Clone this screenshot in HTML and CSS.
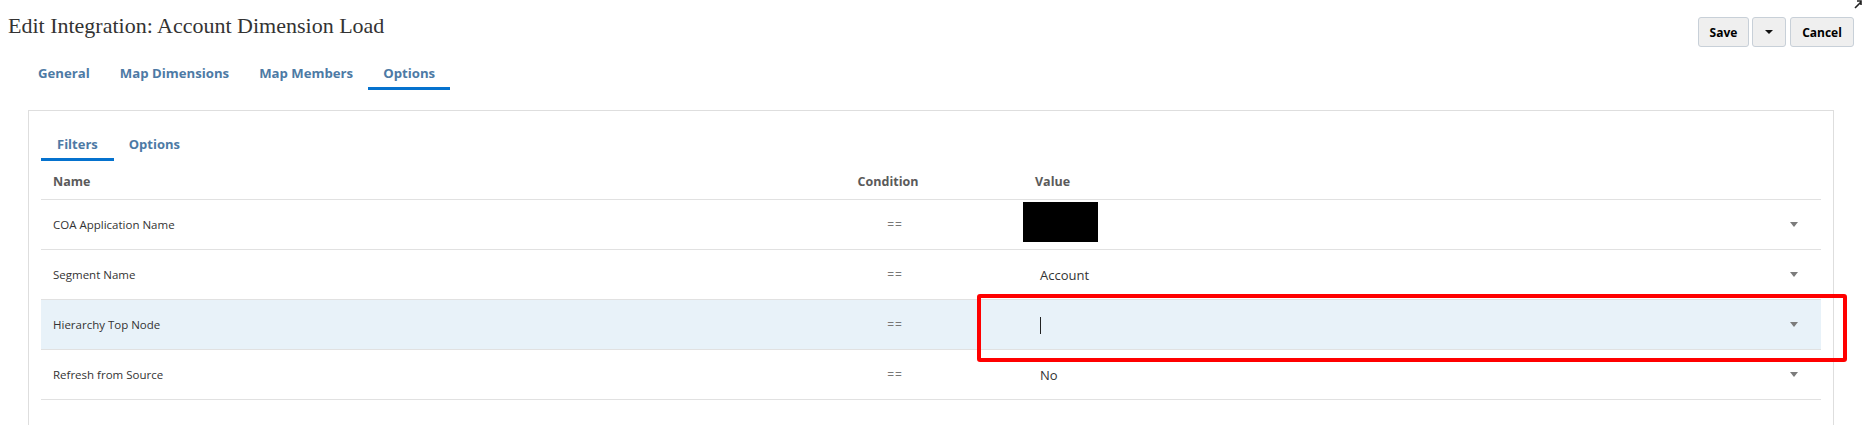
FILE: index.html
```html
<!DOCTYPE html>
<html lang="en">
<head>
<meta charset="utf-8">
<title>Edit Integration: Account Dimension Load</title>
<link rel="stylesheet" href="styles.css">
</head>
<body>
<div class="page">
  <svg class="corner-mark" width="8" height="10" viewBox="0 0 8 10"><path d="M1 9 L7 3 M3 2 L7 2 L7 6" stroke="#222" stroke-width="1.6" fill="none"/></svg>
  <header class="header">
    <h1 class="title">Edit Integration: Account Dimension Load</h1>
    <div class="actions">
      <button class="btn btn-save">Save</button>
      <button class="btn btn-menu"><span class="caret-down"></span></button>
      <button class="btn btn-cancel">Cancel</button>
    </div>
  </header>
  <nav class="tabs">
    <span class="tab">General</span>
    <span class="tab">Map Dimensions</span>
    <span class="tab">Map Members</span>
    <span class="tab active">Options</span>
  </nav>
  <section class="card">
    <nav class="subtabs">
      <span class="tab active">Filters</span>
      <span class="tab">Options</span>
    </nav>
    <div class="table">
      <div class="row head">
        <div class="c-name">Name</div>
        <div class="c-cond">Condition</div>
        <div class="c-val"><span class="head-val">Value</span></div>
      </div>
      <div class="row">
        <div class="c-name">COA Application Name</div>
        <div class="c-cond eq">==</div>
        <div class="c-val"><div class="select"><span class="redacted"></span><span class="arrow"></span></div></div>
      </div>
      <div class="row">
        <div class="c-name">Segment Name</div>
        <div class="c-cond eq">==</div>
        <div class="c-val"><div class="select"><span class="val">Account</span><span class="arrow"></span></div></div>
      </div>
      <div class="row selected">
        <div class="c-name">Hierarchy Top Node</div>
        <div class="c-cond eq">==</div>
        <div class="c-val"><div class="select"><span class="val"><span class="text-cursor"></span></span><span class="arrow"></span></div></div>
      </div>
      <div class="row">
        <div class="c-name">Refresh from Source</div>
        <div class="c-cond eq">==</div>
        <div class="c-val"><div class="select"><span class="val">No</span><span class="arrow"></span></div></div>
      </div>
    </div>
    <div class="highlight-box"></div>
  </section>
</div>
</body>
</html>
```
FILE: styles.css
```css
html, body {
  margin: 0;
  padding: 0;
  background: #ffffff;
}
body {
  font-family: "Open Sans", "Noto Sans", Arial, sans-serif;
  color: #333333;
  width: 1862px;
  height: 425px;
  overflow: hidden;
}
.page {
  position: relative;
  height: 425px;
}
.corner-mark {
  position: absolute;
  right: 0;
  top: -1px;
}
.header {
  display: flex;
  justify-content: space-between;
  align-items: flex-start;
  height: 47px;
}
.title {
  margin: 14px 0 0 8px;
  font-family: "Liberation Serif", "Times New Roman", serif;
  font-weight: normal;
  font-size: 22px;
  line-height: 24px;
  color: #333333;
}
.actions {
  display: flex;
  gap: 3px;
  margin: 17px 8px 0 0;
}
.btn {
  height: 30px;
  box-sizing: border-box;
  border: 1px solid #c8d0d8;
  border-radius: 3px;
  background: #efefef;
  font-family: "Open Sans", Arial, sans-serif;
  font-weight: bold;
  font-size: 12px;
  color: #000;
  padding: 0;
  display: flex;
  align-items: center;
  justify-content: center;
}
.btn-save { width: 51px; }
.btn-menu { width: 34px; margin-right: 1px; }
.btn-cancel { width: 64px; }
.caret-down {
  width: 0;
  height: 0;
  border-left: 4px solid transparent;
  border-right: 4px solid transparent;
  border-top: 4px solid #111;
}
.tabs {
  display: flex;
  margin: 10px 0 0 23px;
}
.tab {
  font-size: 13.2px;
  font-weight: bold;
  color: #4d7aa5;
  line-height: 20px;
  padding: 6px 15px 4px;
  border-bottom: 3px solid transparent;
}
.tab.active {
  border-bottom-color: #0572ce;
}
.card {
  position: relative;
  margin: 20px 28px 0;
  border: 1px solid #dedede;
  border-bottom: none;
  padding: 17px 12px 0;
  height: 297px;
}
.subtabs {
  display: flex;
}
.subtabs .tab {
  font-size: 13px;
}
.subtabs .tab:first-child {
  padding-left: 16px;
  padding-right: 16px;
}
.row {
  display: grid;
  grid-template-columns: 749px 196px 1fr;
  height: 49px;
  border-bottom: 1px solid #e1e1e1;
  align-items: center;
  font-size: 11.5px;
  color: #333;
}
.row.head {
  height: 38px;
  align-items: start;
  font-weight: bold;
  color: #5a5a5a;
  font-size: 12.5px;
}
.row.head > div {
  padding-top: 11px;
  line-height: 20px;
}
.row.selected {
  background: #e8f2f9;
}
.c-name {
  padding-left: 12px;
}
.c-cond {
  text-align: center;
}
.c-cond.eq {
  padding-left: 14px;
  color: #777;
  font-size: 12px;
  letter-spacing: 1px;
}
.c-val {
  padding-left: 37px;
  padding-right: 23px;
  height: 100%;
  display: flex;
  align-items: center;
}
.head-val {
  padding-left: 12px;
}
.row.head .c-val {
  align-items: flex-start;
}
.select {
  flex: 1;
  display: flex;
  align-items: center;
  justify-content: space-between;
  height: 100%;
}
.val {
  padding-left: 17px;
  font-size: 13px;
  color: #333;
  display: flex;
  align-items: center;
}
.redacted {
  display: block;
  width: 75px;
  height: 40px;
  background: #000;
  margin-top: -5px;
}
.text-cursor {
  display: block;
  width: 1px;
  height: 17px;
  background: #222;
  margin-top: 1px;
}
.arrow {
  width: 0;
  height: 0;
  border-left: 4px solid transparent;
  border-right: 4px solid transparent;
  border-top: 5px solid #7b7b7b;
}
.highlight-box {
  position: absolute;
  left: 948px;
  top: 183px;
  width: 862px;
  height: 60px;
  border: 4px solid #ff0000;
  border-radius: 3px;
  pointer-events: none;
}
```
